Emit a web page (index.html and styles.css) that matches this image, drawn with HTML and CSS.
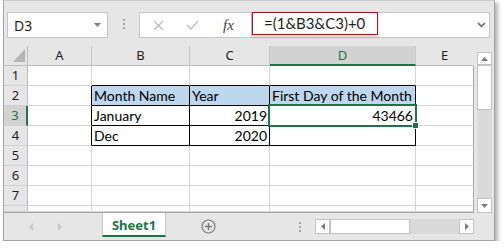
FILE: index.html
```html
<!DOCTYPE html>
<html>
<head>
    <title>Sheet1 - Excel</title>
    <meta charset="utf-8">
    <link rel="stylesheet" href="styles.css">
</head>
<body>
    <div class="window">
        <div class="fbar">
            <div class="namebox">
                <span>D3</span>
                <svg width="7" height="4" viewBox="0 0 7 4"><polygon points="0,0 7,0 3.5,4" fill="#808080"/></svg>
            </div>
            <div class="grip"><i></i><i></i><i></i></div>
            <div class="fnbox">
                <svg class="x" width="11" height="11" viewBox="0 0 11 11"><path d="M1 1L10 10M10 1L1 10" stroke="#bdbdbd" stroke-width="1.3" fill="none"/></svg>
                <svg class="ok" width="13" height="10" viewBox="0 0 13 10"><polyline points="1,5 5,9 12,1" stroke="#bdbdbd" stroke-width="1.4" fill="none"/></svg>
                <span class="fx">fx</span>
            </div>
            <div class="formula">
                <span class="expr">=(1&amp;B3&amp;C3)+0</span>
                <svg class="chev" width="9" height="6" viewBox="0 0 9 6"><polyline points="1,1 4.5,4.5 8,1" stroke="#7a7a7a" stroke-width="1.8" fill="none"/></svg>
            </div>
        </div>

        <div class="main">
            <div class="sheet">
                <!-- header row -->
                <div class="corner"><svg width="12" height="13" viewBox="0 0 12 13"><polygon points="12,0 12,13 0,13" fill="#b4b4b4"/></svg></div>
                <div class="ch">A</div>
                <div class="ch">B</div>
                <div class="ch">C</div>
                <div class="ch on">D</div>
                <div class="ch last">E</div>

                <div class="rh">1</div>
                <div class="c"></div>
                <div class="c bb"></div>
                <div class="c bb"></div>
                <div class="c bb"></div>
                <div class="c e"></div>

                <div class="rh">2</div>
                <div class="c br"></div>
                <div class="c t th">Month Name</div>
                <div class="c t th">Year</div>
                <div class="c t th">First Day of the Month</div>
                <div class="c e"></div>

                <div class="rh on">3</div>
                <div class="c br"></div>
                <div class="c t">January</div>
                <div class="c t num">2019</div>
                <div class="c t num sel">43466</div>
                <div class="c e"></div>

                <div class="rh">4</div>
                <div class="c br"></div>
                <div class="c t">Dec</div>
                <div class="c t num">2020</div>
                <div class="c t"></div>
                <div class="c e"></div>

                <div class="rh">5</div>
                <div class="c"></div><div class="c"></div><div class="c"></div><div class="c"></div><div class="c e"></div>
                <div class="rh">6</div>
                <div class="c"></div><div class="c"></div><div class="c"></div><div class="c"></div><div class="c e"></div>
                <div class="rh">7</div>
                <div class="c"></div><div class="c"></div><div class="c"></div><div class="c"></div><div class="c e"></div>
                <div class="rh"></div>
                <div class="c"></div><div class="c"></div><div class="c"></div><div class="c"></div><div class="c e"></div>
            </div>

            <div class="vscroll">
                <div class="sbtn"><svg width="7" height="4" viewBox="0 0 7 4"><polygon points="0,4 7,4 3.5,0" fill="#7a7a7a"/></svg></div>
                <div class="vthumb"></div>
                <div class="vtrack"></div>
                <div class="sbtn"><svg width="7" height="4" viewBox="0 0 7 4"><polygon points="0,0 7,0 3.5,4" fill="#7a7a7a"/></svg></div>
            </div>
        </div>

        <div class="tabbar">
            <div class="nav">
                <svg width="4" height="8" viewBox="0 0 4 8"><polygon points="4,0 4,8 0,4" fill="#c8c8c8"/></svg>
                <svg width="4" height="8" viewBox="0 0 4 8"><polygon points="0,0 0,8 4,4" fill="#c8c8c8"/></svg>
            </div>
            <div class="tab">Sheet1</div>
            <div class="add">
                <svg width="15" height="15" viewBox="0 0 15 15"><circle cx="7.5" cy="7.5" r="6.5" stroke="#7a7a7a" stroke-width="1.2" fill="none"/><path d="M7.5 4V11M4 7.5H11" stroke="#7a7a7a" stroke-width="1.4"/></svg>
            </div>
            <div class="hscroll">
                <div class="grip"><i></i><i></i><i></i></div>
                <div class="sbtn"><svg width="4" height="7" viewBox="0 0 4 7"><polygon points="4,0 4,7 0,3.5" fill="#7a7a7a"/></svg></div>
                <div class="hthumb"></div>
                <div class="htrack"></div>
                <div class="sbtn"><svg width="4" height="7" viewBox="0 0 4 7"><polygon points="0,0 0,7 4,3.5" fill="#7a7a7a"/></svg></div>
            </div>
        </div>
    </div>
</body>
</html>
```

FILE: styles.css
```css
body {
    margin: 0;
    background-color: #ffffff;
    font-family: "Noto Sans", "Open Sans", sans-serif;
}
.window {
    width: 490px;
    margin-left: 3px;
    background-color: #e6e6e6;
    border: 1px solid #a3a3a3;
    border-top-color: #d0d0d0;
    box-shadow: 3px 3px 4px rgba(0, 0, 0, 0.3);
}

/* formula bar */
.fbar {
    height: 45px;
    box-sizing: border-box;
    padding-top: 11px;
    display: flex;
    align-items: flex-start;
}
.namebox {
    width: 101px;
    height: 26px;
    box-sizing: border-box;
    margin-left: 3px;
    padding: 0 6px 0 6px;
    background-color: #ffffff;
    border: 1px solid #c6c6c6;
    display: flex;
    align-items: center;
    justify-content: space-between;
    font-size: 14px;
    color: #1f1f1f;
}
.grip {
    width: 2px;
    margin: 7px 14px 0 15px;
    display: flex;
    flex-direction: column;
    gap: 2px;
}
.grip i {
    display: block;
    width: 2px;
    height: 2px;
    background-color: #a6a6a6;
}
.fnbox {
    width: 112px;
    height: 26px;
    box-sizing: border-box;
    background-color: #ffffff;
    border: 1px solid #c6c6c6;
    border-right: none;
    display: flex;
    align-items: center;
}
.fnbox .x {
    margin-left: 13px;
}
.fnbox .ok {
    margin-left: 22px;
}
.fnbox .fx {
    margin-left: 24px;
    font-family: "Liberation Serif", serif;
    font-style: italic;
    font-size: 15px;
    color: #444444;
}
.formula {
    width: 239px;
    height: 26px;
    box-sizing: border-box;
    background-color: #ffffff;
    border: 1px solid #c6c6c6;
    display: flex;
    align-items: flex-start;
}
.expr {
    width: 126px;
    height: 23px;
    box-sizing: border-box;
    margin-top: -1px;
    padding-left: 11px;
    border: 1px solid #a8141f;
    box-shadow: 0 2px 3px rgba(0, 0, 0, 0.18);
    font-family: Lato, "Liberation Sans", sans-serif;
    font-size: 15px;
    line-height: 21px;
    color: #1f1f1f;
}
.chev {
    margin: 9px 0 0 99px;
}

/* sheet */
.main {
    display: flex;
}
.sheet {
    width: 470px;
    display: grid;
    grid-template-columns: 24px 64px 98px 80px 146px 58px;
    grid-template-rows: 20px repeat(7, 20px) 6px;
    border-bottom: 1px solid #a6a6a6;
    overflow: hidden;
    background-color: #ffffff;
}
.corner {
    background-color: #e6e6e6;
    border-right: 1px solid #bdbdbd;
    border-bottom: 1px solid #bdbdbd;
    display: flex;
    align-items: flex-end;
    justify-content: flex-end;
    padding: 0 2px 3px 0;
}
.ch {
    background-color: #e6e6e6;
    border-right: 1px solid #c8c8c8;
    border-bottom: 1px solid #bdbdbd;
    text-align: center;
    font-size: 13px;
    line-height: 19px;
    color: #222222;
}
.ch.on {
    background-color: #d2d2d2;
    color: #217346;
    border-bottom: 2px solid #217346;
    line-height: 18px;
}
.ch.last {
    border-right-color: transparent;
}
.rh {
    background-color: #e6e6e6;
    border-right: 1px solid #bdbdbd;
    border-bottom: 1px solid #d0d0d0;
    text-align: center;
    font-size: 13px;
    line-height: 19px;
    color: #222222;
}
.rh.on {
    background-color: #d2d2d2;
    color: #217346;
    border-right: 2px solid #217346;
}
.c {
    border-right: 1px solid #d4d4d4;
    border-bottom: 1px solid #d4d4d4;
    padding: 0 2px;
    font-family: Lato, "Liberation Sans", sans-serif;
    font-size: 14px;
    line-height: 19px;
    color: #000000;
    white-space: nowrap;
}
.c.e {
    border-right-color: #a6a6a6;
}
.c.bb {
    border-bottom-color: #000000;
}
.c.br {
    border-right-color: #000000;
}
.c.t {
    border-right-color: #000000;
    border-bottom-color: #000000;
}
.c.th {
    background-color: #bdd7ee;
}
.c.num {
    text-align: right;
}
.c.sel {
    position: relative;
}
.c.sel::after {
    content: "";
    position: absolute;
    left: -2px;
    top: -2px;
    right: -2px;
    bottom: -2px;
    border: 2px solid #217346;
}
.c.sel::before {
    content: "";
    position: absolute;
    right: -4px;
    bottom: -4px;
    width: 5px;
    height: 5px;
    background-color: #217346;
    border: 1px solid #ffffff;
    z-index: 1;
}

/* scrollbars */
.vscroll {
    width: 20px;
    box-sizing: border-box;
    padding: 6px 0 0 3px;
    display: flex;
    flex-direction: column;
}
.sbtn {
    width: 15px;
    height: 15px;
    box-sizing: border-box;
    background-color: #ffffff;
    border: 1px solid #c2c2c2;
    display: flex;
    align-items: center;
    justify-content: center;
}
.vscroll .sbtn:first-child {
    height: 13px;
}
.vthumb {
    width: 15px;
    height: 45px;
    box-sizing: border-box;
    background-color: #ffffff;
    border: 1px solid #c2c2c2;
}
.vtrack {
    width: 15px;
    flex: 1;
    background-color: #dadada;
}

/* sheet tabs */
.tabbar {
    height: 27px;
    display: flex;
    align-items: center;
}
.nav {
    width: 98px;
    box-sizing: border-box;
    padding-left: 25px;
    display: flex;
    gap: 25px;
}
.tab {
    align-self: flex-start;
    width: 64px;
    height: 24px;
    box-sizing: border-box;
    background-color: #ffffff;
    border-left: 1px solid #c6c6c6;
    border-right: 1px solid #c6c6c6;
    border-bottom: 2px solid #217346;
    text-align: center;
    font-weight: bold;
    font-size: 13px;
    line-height: 24px;
    color: #217346;
}
.add {
    width: 84px;
    display: flex;
    justify-content: center;
}
.hscroll {
    display: flex;
    align-items: center;
}
.hscroll .grip {
    margin: 0 14px 0 49px;
}
.hthumb {
    width: 80px;
    height: 15px;
    box-sizing: border-box;
    background-color: #ffffff;
    border: 1px solid #c2c2c2;
}
.htrack {
    width: 49px;
    height: 15px;
    background-color: #dadada;
}
```
